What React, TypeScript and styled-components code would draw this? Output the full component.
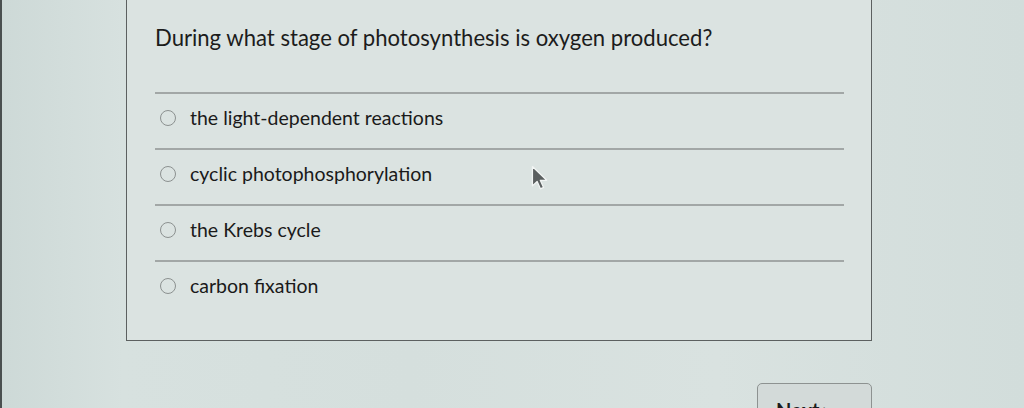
import React from "react";
import styled, { createGlobalStyle } from "styled-components";

const Global = createGlobalStyle`
  html, body { margin: 0; padding: 0; }
  body {
    width: 1024px;
    height: 408px;
    overflow: hidden;
    background: linear-gradient(90deg, #cdd9d7 0%, #d7e1df 12%, #d5dfdd 40%, #d9e2e0 70%, #d2dddb 100%);
    font-family: Lato, "Open Sans", sans-serif;
  }
`;

const Page = styled.div`
  position: relative;
  width: 1024px;
  height: 408px;
  padding-left: 124px;
  box-sizing: border-box;
  border-left: 2px solid #4a5050;
  display: flex;
  flex-direction: column;
`;

const Card = styled.div`
  flex-shrink: 0;
  width: 746px;
  height: 341px;
  box-sizing: border-box;
  border: 1.5px solid #5c6060;
  border-top: none;
  background: #dbe3e1;
  padding: 0 27px 0 28px;
  display: flex;
  flex-direction: column;
`;

const Question = styled.div`
  font-size: 22.1px;
  line-height: 28px;
  color: #1c1c1c;
  padding: 24px 0 40px;
`;

const Option = styled.label`
  display: flex;
  align-items: center;
  height: 56px;
  box-sizing: border-box;
  border-top: 2px solid #a2a7a6;
  padding-bottom: 7px;
  font-size: 19.5px;
  color: #1a1a1a;
`;

const Radio = styled.span`
  width: 16px;
  height: 16px;
  box-sizing: border-box;
  border: 1.5px solid #8c9190;
  border-radius: 50%;
  margin-left: 5px;
  margin-right: 14px;
  flex-shrink: 0;
`;

const Footer = styled.div`
  flex-shrink: 0;
  width: 746px;
  display: flex;
  justify-content: flex-end;
  padding-top: 42px;
`;

const NextButton = styled.button`
  width: 115px;
  height: 40px;
  box-sizing: border-box;
  border: 1.5px solid #8d9291;
  border-radius: 5px;
  background: #d3dad9;
  font-family: Lato, sans-serif;
  font-size: 20px;
  font-weight: 700;
  color: #1c1c1c;
  text-align: left;
  padding: 12px 0 0 18px;
  line-height: 28px;
`;

const Cursor = styled.svg`
  position: absolute;
  left: 529px;
  top: 165px;
`;

const options = [
  "the light-dependent reactions",
  "cyclic photophosphorylation",
  "the Krebs cycle",
  "carbon fixation",
];

export default function App() {
  return (
    <>
      <Global />
      <Page>
        <Card>
          <Question>During what stage of photosynthesis is oxygen produced?</Question>
          {options.map((o) => (
            <Option key={o}>
              <Radio />
              {o}
            </Option>
          ))}
        </Card>
        <Footer>
          <NextButton>Next ▸</NextButton>
        </Footer>
        <Cursor width="20" height="26" viewBox="0 0 14 18">
          <path d="M1 1 L1 14.5 L4.3 11.4 L6.6 16.6 L8.8 15.6 L6.5 10.6 L11 10.6 Z" fill="#5a5f5f" stroke="#f2f5f4" strokeWidth="0.9" strokeLinejoin="round" />
        </Cursor>
      </Page>
    </>
  );
}
